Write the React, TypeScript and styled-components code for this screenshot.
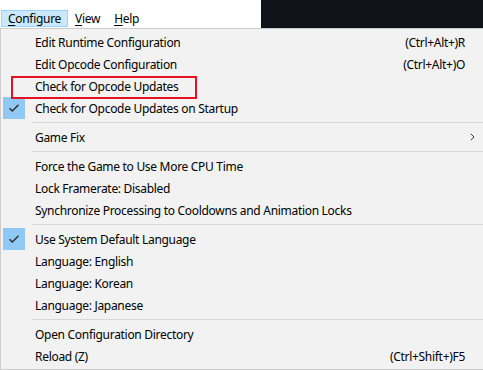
import React from 'react';
import styled, { createGlobalStyle } from 'styled-components';

const GlobalStyle = createGlobalStyle`
  html, body {
    margin: 0;
    padding: 0;
    background: #ffffff;
  }
  body {
    font-family: "Noto Sans", "Liberation Sans", sans-serif;
    font-size: 12px;
    letter-spacing: -0.3px;
    color: #000000;
  }
`;

const Screen = styled.div`
  width: 483px;
  height: 370px;
  overflow: hidden;
  position: relative;
`;

const TopStrip = styled.div`
  display: flex;
  height: 28px;
`;

const MenuBar = styled.div`
  width: 260px;
  display: flex;
  align-items: flex-end;
  padding-left: 1px;
  background: #ffffff;
`;

const BarItem = styled.div<{ $open?: boolean }>`
  height: 17px;
  line-height: 16px;
  padding: 0 6px;
  box-sizing: border-box;
  border: 1px solid ${(p) => (p.$open ? '#99d1ff' : 'transparent')};
  background: ${(p) => (p.$open ? '#cce8ff' : 'transparent')};
  margin-bottom: 1px;
`;

const DarkPane = styled.div`
  flex: 1;
  background: #0f1218;
`;

const Mnemonic = styled.span`
  text-decoration: underline;
  text-underline-offset: 2px;
`;

const Popup = styled.div`
  box-sizing: border-box;
  width: 485px;
  border: 1px solid #cccccc;
  background: #f2f2f2;
  padding: 2px 0 2px 0;
  display: flex;
  flex-direction: column;
`;

const Item = styled.div`
  height: 22px;
  display: grid;
  grid-template-columns: 34px 1fr auto 19px;
  align-items: center;
`;

const Gutter = styled.div`
  display: flex;
  align-items: center;
  padding-left: 2px;
`;

const CheckBox = styled.div`
  width: 22px;
  height: 22px;
  background: #90c8f6;
  display: flex;
  align-items: center;
  justify-content: center;
`;

const Label = styled.span`
  white-space: nowrap;
  position: relative;
`;

const Shortcut = styled.span`
  white-space: nowrap;
  text-align: right;
`;

const Arrow = styled.div`
  display: flex;
  align-items: center;
  padding-left: 5px;
`;

const Separator = styled.div`
  height: 7px;
  display: flex;
  align-items: center;
  padding-left: 31px;

  &::after {
    content: '';
    flex: 1;
    height: 1px;
    background: #d7d7d7;
  }
`;

// red annotation box drawn over the "Check for Opcode Updates" entry
const Highlight = styled.div`
  position: absolute;
  left: -24px;
  top: -2px;
  width: 186px;
  height: 23px;
  box-sizing: border-box;
  border: 2px solid #e81123;
  pointer-events: none;
`;

type Entry =
  | { kind: 'sep' }
  | { kind: 'item'; label: string; shortcut?: string; checked?: boolean; submenu?: boolean; marked?: boolean };

const entries: Entry[] = [
  { kind: 'item', label: 'Edit Runtime Configuration', shortcut: '(Ctrl+Alt+)R' },
  { kind: 'item', label: 'Edit Opcode Configuration', shortcut: '(Ctrl+Alt+)O' },
  { kind: 'item', label: 'Check for Opcode Updates', marked: true },
  { kind: 'item', label: 'Check for Opcode Updates on Startup', checked: true },
  { kind: 'sep' },
  { kind: 'item', label: 'Game Fix', submenu: true },
  { kind: 'sep' },
  { kind: 'item', label: 'Force the Game to Use More CPU Time' },
  { kind: 'item', label: 'Lock Framerate: Disabled' },
  { kind: 'item', label: 'Synchronize Processing to Cooldowns and Animation Locks' },
  { kind: 'sep' },
  { kind: 'item', label: 'Use System Default Language', checked: true },
  { kind: 'item', label: 'Language: English' },
  { kind: 'item', label: 'Language: Korean' },
  { kind: 'item', label: 'Language: Japanese' },
  { kind: 'sep' },
  { kind: 'item', label: 'Open Configuration Directory' },
  { kind: 'item', label: 'Reload (Z)', shortcut: '(Ctrl+Shift+)F5' },
];

function CheckMark() {
  return (
    <svg width="12" height="10" viewBox="0 0 12 10">
      <path d="M1.5 5.2 L4.3 8 L10.5 1.8" fill="none" stroke="#2b2b2b" strokeWidth="1.4" />
    </svg>
  );
}

function Chevron() {
  return (
    <svg width="5" height="8" viewBox="0 0 5 8">
      <path d="M0.8 0.8 L4 4 L0.8 7.2" fill="none" stroke="#333333" strokeWidth="1" />
    </svg>
  );
}

export default function App() {
  return (
    <Screen>
      <GlobalStyle />
      <TopStrip>
        <MenuBar>
          <BarItem $open>
            <Mnemonic>C</Mnemonic>onfigure
          </BarItem>
          <BarItem>
            <Mnemonic>V</Mnemonic>iew
          </BarItem>
          <BarItem>
            <Mnemonic>H</Mnemonic>elp
          </BarItem>
        </MenuBar>
        <DarkPane />
      </TopStrip>
      <Popup>
        {entries.map((e, i) =>
          e.kind === 'sep' ? (
            <Separator key={i} />
          ) : (
            <Item key={i}>
              <Gutter>{e.checked && <CheckBox><CheckMark /></CheckBox>}</Gutter>
              <Label>
                {e.label}
                {e.marked && <Highlight />}
              </Label>
              <Shortcut>{e.shortcut}</Shortcut>
              <Arrow>{e.submenu && <Chevron />}</Arrow>
            </Item>
          )
        )}
      </Popup>
    </Screen>
  );
}
